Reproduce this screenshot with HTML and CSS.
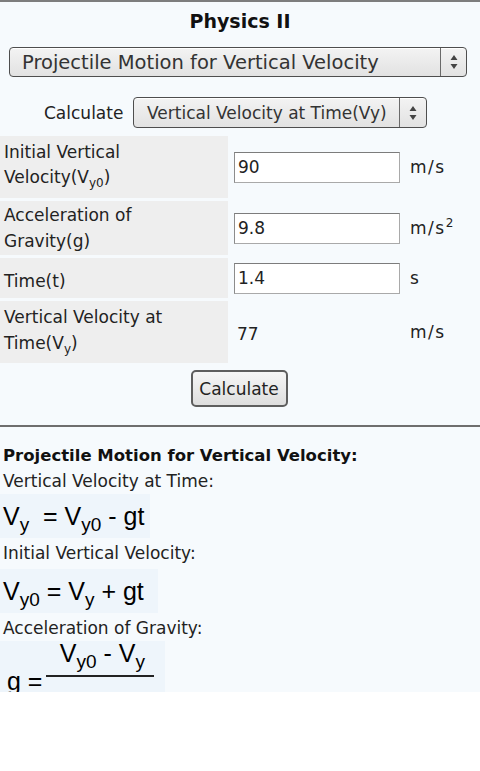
FILE: index.html
```html
<!DOCTYPE html>
<html>
<head>
<meta charset="utf-8">
<title>Physics II</title>
<link rel="stylesheet" href="styles.css">
</head>
<body>
<div class="page">
  <h1 class="title">Physics II</h1>

  <div class="select select-main">
    <span class="select-text">Projectile Motion for Vertical Velocity</span>
    <span class="select-arrows">
      <svg width="10" height="16" viewBox="0 0 10 16"><path d="M5 1 L8.5 6 L1.5 6 Z M5 15 L8.5 10 L1.5 10 Z" fill="#444"/></svg>
    </span>
  </div>

  <div class="calc-row">
    <span class="calc-label">Calculate</span>
    <div class="select select-small">
      <span class="select-text">Vertical Velocity at Time(Vy)</span>
      <span class="select-arrows">
        <svg width="10" height="16" viewBox="0 0 10 16"><path d="M5 1 L8.5 6 L1.5 6 Z M5 15 L8.5 10 L1.5 10 Z" fill="#444"/></svg>
      </span>
    </div>
  </div>

  <div class="form-grid">
    <div class="label r1">Initial Vertical<br>Velocity(V<sub>y0</sub>)</div>
    <div class="field"><input class="box" type="text" value="90"></div>
    <div class="unit"><span>m/s</span></div>

    <div class="label r2">Acceleration of<br>Gravity(g)</div>
    <div class="field"><input class="box" type="text" value="9.8"></div>
    <div class="unit"><span>m/s<sup>2</sup></span></div>

    <div class="label r3">Time(t)</div>
    <div class="field"><input class="box" type="text" value="1.4"></div>
    <div class="unit"><span>s</span></div>

    <div class="label r4">Vertical Velocity at<br>Time(V<sub>y</sub>)</div>
    <div class="field result">77</div>
    <div class="unit"><span>m/s</span></div>
  </div>

  <div class="btn-row"><button class="btn">Calculate</button></div>

  <hr class="divider">

  <div class="info">
    <div class="info-title">Projectile Motion for Vertical Velocity:</div>
    <div class="info-label">Vertical Velocity at Time:</div>
    <div class="formula f1">V<sub>y</sub>&nbsp; = V<sub>y0</sub> - gt</div>
    <div class="info-label">Initial Vertical Velocity:</div>
    <div class="formula f2">V<sub>y0</sub> = V<sub>y</sub> + gt</div>
    <div class="info-label">Acceleration of Gravity:</div>
    <div class="formula f3">
      <div class="lhs">g =</div>
      <div class="frac"><div class="num">V<sub>y0</sub> - V<sub>y</sub></div></div>
    </div>
  </div>
</div>
</body>
</html>
```

FILE: styles.css
```css
html { background: #ffffff; }
body {
  margin: 0;
  font-family: "DejaVu Sans", Verdana, sans-serif;
  color: #222;
}
.page {
  height: 690px;
  overflow: hidden;
  background: #f6fafd;
  border-top: 2px solid #7d7d7d;
}
.title {
  margin: 7px 0 0;
  font-size: 19px;
  line-height: 24px;
  font-weight: bold;
  text-align: center;
  color: #111;
}
.select {
  display: flex;
  align-items: stretch;
  box-sizing: border-box;
  border: 1px solid #4e4e4e;
  border-radius: 4px;
  background: linear-gradient(#f3f3f3, #e2e2e2);
  color: #333;
  box-shadow: inset 0 1px 0 #ffffff;
}
.select-text {
  flex: 1;
  display: flex;
  align-items: center;
  white-space: nowrap;
  overflow: hidden;
}
.select-arrows {
  display: flex;
  align-items: center;
  justify-content: center;
  border-left: 1px solid #6a6a6a;
}
.select-main {
  margin: 14px 13px 0 9px;
  height: 30px;
}
.select-main .select-text {
  font-size: 19.5px;
  padding-left: 12px;
}
.select-main .select-arrows { width: 25px; }
.calc-row {
  display: flex;
  align-items: center;
  margin: 20px 0 0 44px;
}
.calc-label {
  font-size: 17px;
  color: #222;
  width: 89px;
}
.select-small {
  width: 294px;
  height: 31px;
}
.select-small .select-text {
  font-size: 17px;
  padding-left: 13px;
}
.select-small .select-arrows { width: 26px; }

.form-grid {
  display: grid;
  grid-template-columns: 228px 182px 1fr;
  grid-template-rows: 62px 54px 40px 62px;
  row-gap: 3px;
  margin-top: 8px;
  font-size: 17px;
}
.label {
  background: #eeeeee;
  padding: 4px 4px 0;
  line-height: 26px;
  color: #222;
}
.label.r1 { padding-top: 4px; line-height: 25px; }
.label.r2 { padding-top: 1px; }
.label.r3 { padding-top: 10px; }
.label.r4 { padding-top: 3px; }
sub { font-size: 12px; vertical-align: -4px; line-height: 0; }
sup { font-size: 12px; vertical-align: 7px; line-height: 0; }
.field {
  display: flex;
  align-items: center;
  padding-left: 6px;
}
.box {
  box-sizing: border-box;
  width: 166px;
  height: 31px;
  border: 1px solid #a9a9a9;
  border-top-color: #7c7c7c;
  border-left-color: #8c8c8c;
  background: #fff;
  font-family: "DejaVu Sans", Verdana, sans-serif;
  font-size: 17px;
  color: #222;
  padding: 0 3px;
  margin: 0;
}
.result { padding-left: 9px; padding-top: 4px; }
.unit {
  display: flex;
  align-items: center;
  letter-spacing: 1.5px;
  color: #222;
}
.btn-row {
  display: flex;
  justify-content: center;
  margin-top: 7px;
}
.btn {
  box-sizing: border-box;
  width: 97px;
  height: 37px;
  margin-left: -2px;
  border: 2px solid #5e5e5e;
  border-radius: 5px;
  background: linear-gradient(#f6f6f6, #dedede);
  font-family: "DejaVu Sans", Verdana, sans-serif;
  font-size: 17px;
  color: #222;
  padding: 0;
}
.divider {
  margin: 18px 0 0;
  border: 0;
  border-top: 2px solid #6e6e6e;
  height: 0;
}
.info {
  padding: 17px 0 0 3px;
}
.info-title {
  font-weight: bold;
  font-size: 16.5px;
  line-height: 24px;
  color: #111;
}
.info-label {
  font-size: 17px;
  line-height: 26px;
  color: #222;
}
.formula {
  font-family: "Liberation Sans", Arial, sans-serif;
  font-size: 25px;
  line-height: 44px;
  color: #000;
  background: #eef5fb;
  margin-left: -3px;
  padding-left: 3px;
  white-space: nowrap;
}
.formula sub { font-size: 19px; vertical-align: -6px; }
.f1 { width: 147px; height: 44px; margin-bottom: 2px; }
.f2 { width: 155px; height: 44px; margin-top: 3px; margin-bottom: 2px; }
.f3 {
  width: 165px;
  height: 60px;
  padding-left: 0;
  display: flex;
  align-items: flex-start;
}
.lhs { margin-left: 7px; margin-top: 25px; line-height: 30px; }
.frac {
  margin-left: 4px;
  width: 108px;
  height: 34px;
  border-bottom: 2px solid #222;
  text-align: center;
}
.num { line-height: 25px; padding-left: 4px; }
```
